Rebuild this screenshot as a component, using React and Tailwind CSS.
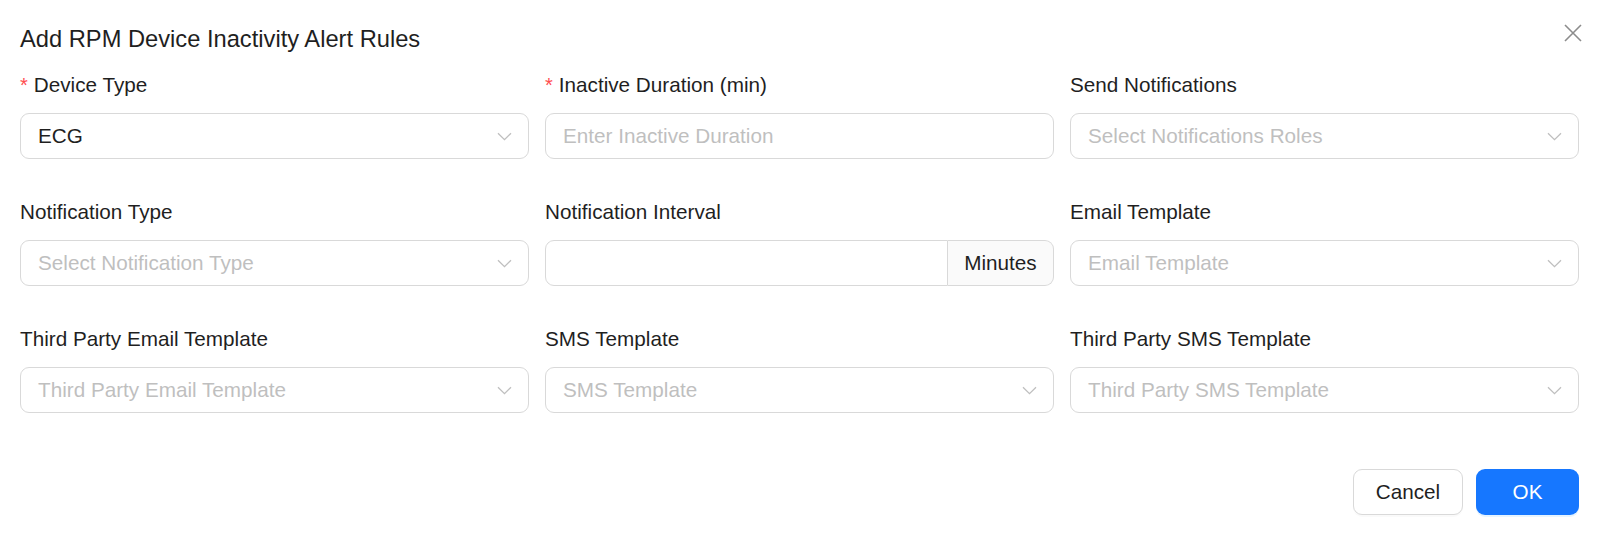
import React, { useState } from 'react';

const Chevron = () => (
    <svg width="15" height="9" viewBox="0 0 15 9" fill="none" className="shrink-0">
        <path d="M1 1.2L7.5 7.6L14 1.2" stroke="#bfbfbf" strokeWidth="1.3" />
    </svg>
);

const Label = ({ required, children }) => (
    <label className="h-[31px] mb-[13px] flex items-center text-[20.7px] leading-[31px] text-[#1f1f1f]">
        {required && <span className="text-[#ff4d4f] mr-[6px] text-[20px] leading-none">*</span>}
        {children}
    </label>
);

const SelectBox = ({ value, placeholder }) => (
    <div className="h-[46px] w-full flex items-center justify-between border border-[#d9d9d9] rounded-[9px] bg-white pl-[17px] pr-[16px] cursor-pointer">
        <span className={value ? 'text-[20.7px] text-[#1f1f1f]' : 'text-[20.7px] text-[#bfbfbf]'}>
            {value || placeholder}
        </span>
        <Chevron />
    </div>
);

const Field = ({ label, required, children }) => (
    <div className="flex flex-col mb-[37px]">
        <Label required={required}>{label}</Label>
        {children}
    </div>
);

const App = () => {
    const [duration, setDuration] = useState('');
    const [interval, setInterval] = useState('');

    return (
        <div
            className="w-full h-[534px] bg-white pl-[20px] pr-[21px] pt-[22px] flex flex-col"
            style={{ fontFamily: '"Liberation Sans", Arial, Helvetica, sans-serif' }}
        >
            <div className="flex items-start justify-between mb-[13px]">
                <h2 className="text-[23.7px] leading-[34px] font-normal text-[#1f1f1f]">
                    Add RPM Device Inactivity Alert Rules
                </h2>
                <button className="mt-[2px] -mr-[3px] w-[18px] h-[18px] flex items-center justify-center">
                    <svg width="18" height="18" viewBox="0 0 18 18" fill="none">
                        <path d="M1 1L17 17M17 1L1 17" stroke="#8c8c8c" strokeWidth="1.6" />
                    </svg>
                </button>
            </div>

            <div className="grid grid-cols-3 gap-x-[16px]">
                <Field label="Device Type" required>
                    <SelectBox value="ECG" />
                </Field>
                <Field label="Inactive Duration (min)" required>
                    <input
                        type="text"
                        placeholder="Enter Inactive Duration"
                        value={duration}
                        onChange={(e) => setDuration(e.target.value)}
                        className="h-[46px] w-full border border-[#d9d9d9] rounded-[9px] px-[17px] text-[20.7px] text-[#1f1f1f] placeholder:text-[#bfbfbf] outline-none"
                    />
                </Field>
                <Field label="Send Notifications">
                    <SelectBox placeholder="Select Notifications Roles" />
                </Field>

                <Field label="Notification Type">
                    <SelectBox placeholder="Select Notification Type" />
                </Field>
                <Field label="Notification Interval">
                    <div className="flex h-[46px] w-full">
                        <input
                            type="text"
                            value={interval}
                            onChange={(e) => setInterval(e.target.value)}
                            className="flex-1 min-w-0 h-full border border-[#d9d9d9] rounded-l-[9px] px-[17px] text-[20.7px] text-[#1f1f1f] outline-none"
                        />
                        <div className="w-[106px] h-full flex items-center justify-center bg-[#fafafa] border border-l-0 border-[#d9d9d9] rounded-r-[9px] text-[20.7px] text-[#1f1f1f]">
                            Minutes
                        </div>
                    </div>
                </Field>
                <Field label="Email Template">
                    <SelectBox placeholder="Email Template" />
                </Field>

                <Field label="Third Party Email Template">
                    <SelectBox placeholder="Third Party Email Template" />
                </Field>
                <Field label="SMS Template">
                    <SelectBox placeholder="SMS Template" />
                </Field>
                <Field label="Third Party SMS Template">
                    <SelectBox placeholder="Third Party SMS Template" />
                </Field>
            </div>

            <div className="flex justify-end gap-[13px] mt-[19px]">
                <button className="h-[46px] w-[110px] rounded-[9px] border border-[#d9d9d9] bg-white text-[20.7px] text-[#1f1f1f] shadow-[0_2px_0_rgba(0,0,0,0.02)]">
                    Cancel
                </button>
                <button className="h-[46px] w-[103px] rounded-[9px] bg-[#1677ff] text-[20.7px] text-white shadow-[0_2px_0_rgba(5,145,255,0.1)]">
                    OK
                </button>
            </div>
        </div>
    );
};

export default App;
